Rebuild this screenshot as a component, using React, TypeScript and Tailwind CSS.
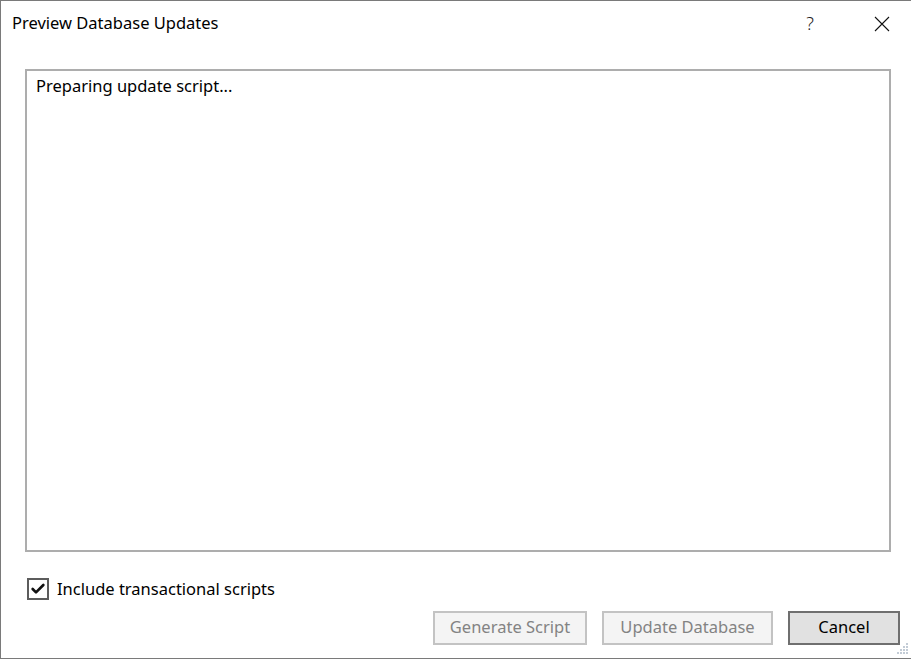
import { Check } from "lucide-react";

const font = { fontFamily: '"Segoe UI", "Noto Sans", "Open Sans", sans-serif' };

function ResizeGrip() {
  // Staircase of faint dots, like the Win32 size grip.
  const dots: [number, number][] = [];
  for (let row = 0; row < 4; row++) {
    for (let col = 3 - row; col < 4; col++) {
      dots.push([col * 3, row * 3]);
    }
  }
  return (
    <svg width="12" height="12" viewBox="0 0 12 12" className="absolute right-[2px] bottom-[3px]">
      {dots.map(([x, y]) => (
        <rect key={`${x}-${y}`} x={x} y={y} width="2" height="2" fill="#c3ccd6" />
      ))}
    </svg>
  );
}

export default function App() {
  return (
    <div
      className="relative flex h-[659px] w-[911px] flex-col border-t border-b border-l border-[#7a7a7a] bg-white text-[16.5px] text-black"
      style={font}
    >
      {/* title bar */}
      <div className="flex h-[45px] items-center pl-[11px]">
        <span className="flex-1">Preview Database Updates</span>
        <span className="mr-[60px] text-[18px] font-light text-[#222]">?</span>
        <svg width="16" height="16" viewBox="0 0 16 16" className="mr-[21px]">
          <path d="M1 1L15 15M15 1L1 15" stroke="#111" strokeWidth="1.1" />
        </svg>
      </div>

      {/* script output */}
      <div className="mt-[23px] mr-[20px] ml-[24px] h-[483px] border-2 border-[#adadad] px-[9px] pt-[1px] leading-[28px]">
        Preparing update script...
      </div>

      <label className="mt-[25px] ml-[26px] flex items-center gap-[8px]">
        <span className="flex h-[22px] w-[22px] items-center justify-center border-2 border-[#5c5c5c]">
          <Check size={16} strokeWidth={4} color="#111" />
        </span>
        <span>Include transactional scripts</span>
      </label>

      <div className="mt-[9px] flex justify-end gap-[15px] pr-[11px]">
        <button className="h-[34px] w-[154px] border-2 border-[#c3c3c3] bg-[#f4f4f4] text-[#838383]">
          Generate Script
        </button>
        <button className="h-[34px] w-[171px] border-2 border-[#c3c3c3] bg-[#f4f4f4] text-[#838383]">
          Update Database
        </button>
        <button className="h-[34px] w-[112px] border-2 border-[#6f6f6f] bg-[#e1e1e1]">Cancel</button>
      </div>

      <ResizeGrip />
    </div>
  );
}
